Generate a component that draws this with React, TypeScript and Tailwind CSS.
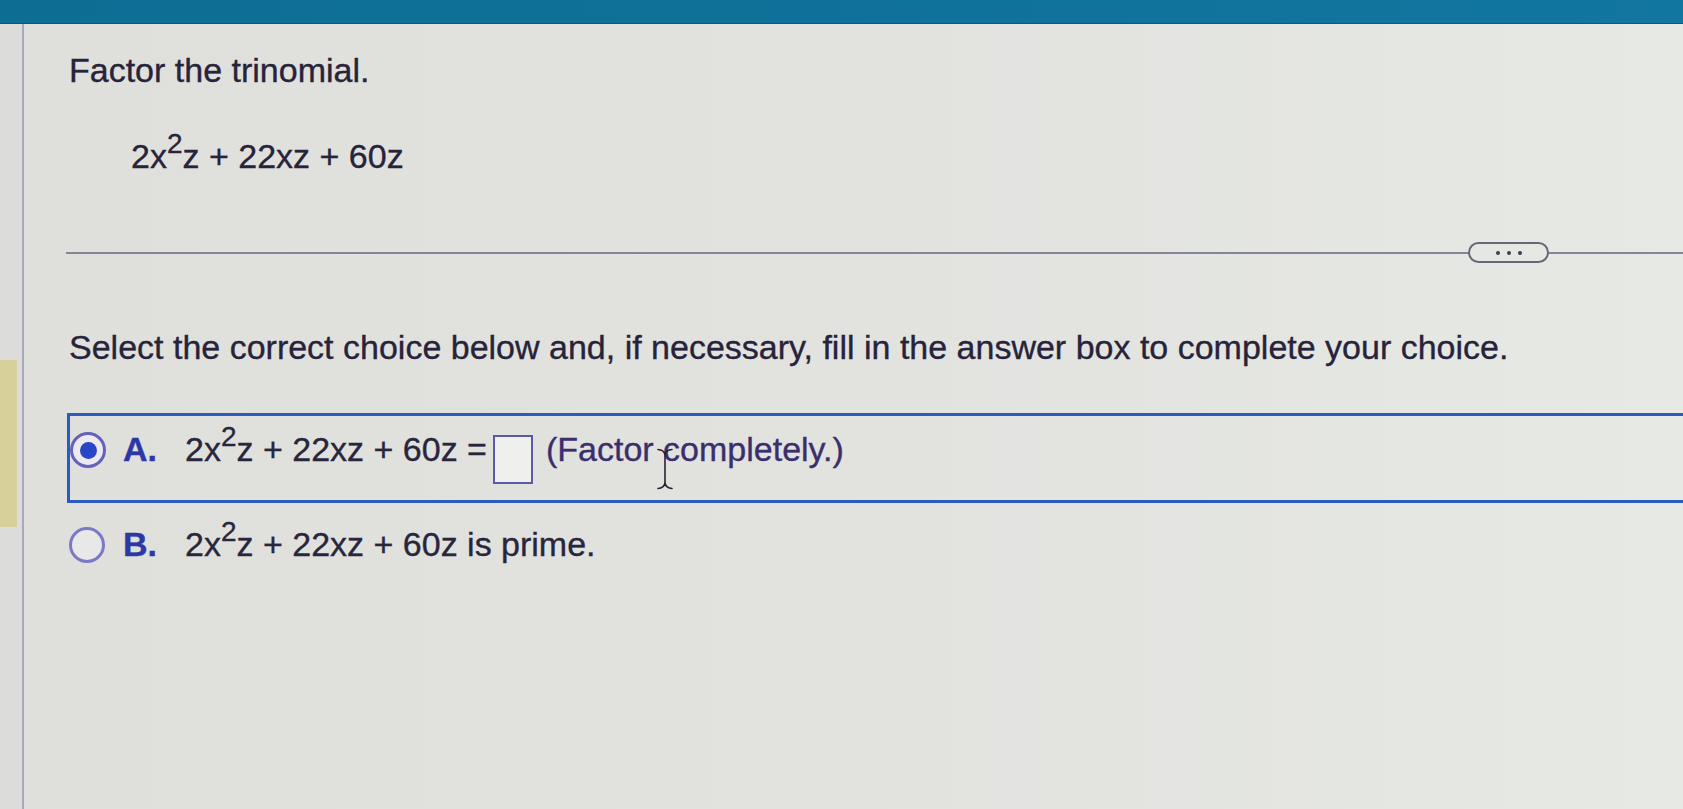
import React from "react";

function Formula({ tail }: { tail?: string }) {
  return (
    <span className="whitespace-nowrap">
      2x<sup className="text-[28px] -top-[15px]">2</sup>z + 22xz + 60z{tail}
    </span>
  );
}

function Radio({ checked }: { checked?: boolean }) {
  return (
    <div
      className={
        "mt-[3px] flex h-[36px] w-[36px] shrink-0 items-center justify-center rounded-full border-[3px] " +
        (checked ? "border-[#6462bc] bg-[#eceaf0]" : "border-[#7c7ac6] bg-[#e8e8e8]")
      }
    >
      {checked && <div className="h-[17px] w-[17px] rounded-full bg-[#2a45c6]" />}
    </div>
  );
}

function TextCursor() {
  return (
    <svg
      className="absolute left-[586px] top-[32px]"
      width="18"
      height="42"
      viewBox="0 0 18 42"
      fill="none"
      stroke="#2a2132"
      strokeWidth="1.6"
      strokeLinecap="round"
    >
      <path d="M2 1.5 Q8 2 9 6.5 Q10 2 16 1.5" />
      <path d="M9 6.5 V35" />
      <path d="M2 40.5 Q8 40 9 35 Q10 40 16 40.5" />
    </svg>
  );
}

export default function App() {
  return (
    <div className="flex h-[809px] w-full flex-col overflow-hidden bg-gradient-to-r from-[#dfdfdc] via-[#e2e2df] to-[#e6e9e4] font-['Liberation_Sans',Arial,sans-serif] text-[34px] leading-[40px] text-[#27233a] [-webkit-text-stroke:0.35px_currentColor]">
      {/* top bar */}
      <div className="h-[24px] shrink-0 border-b border-[#0b5a7a] bg-gradient-to-r from-[#0e6d93] to-[#1176a0]" />

      <div className="flex flex-1">
        {/* left rail */}
        <div className="flex w-[24px] shrink-0 border-r-2 border-[#a9a9bd] bg-[#dcdcda]">
          <div className="mt-[336px] h-[167px] w-[17px] bg-[#d7d09a]" />
        </div>

        {/* question */}
        <div className="flex flex-1 flex-col pl-[45px] pt-[26px]">
          <p>Factor the trinomial.</p>
          <p className="ml-[62px] mt-[46px]">
            <Formula />
          </p>

          <div className="-ml-[3px] mt-[66px] flex items-center">
            <div className="h-[2px] flex-1 bg-[#85859a]" />
            <div className="flex h-[21px] w-[81px] items-center justify-center gap-[7px] rounded-full border-2 border-[#66667a]">
              <span className="h-[4px] w-[4px] rounded-full bg-[#3d3d56]" />
              <span className="h-[4px] w-[4px] rounded-full bg-[#3d3d56]" />
              <span className="h-[4px] w-[4px] rounded-full bg-[#3d3d56]" />
            </div>
            <div className="h-[2px] w-[134px] bg-[#85859a]" />
          </div>

          <p className="mt-[64px] whitespace-nowrap">
            Select the correct choice below and, if necessary, fill in the answer box to complete your choice.
          </p>

          {/* choice A */}
          <div className="relative -ml-[2px] mt-[46px] h-[90px] border-[3px] border-r-0 border-[#2b5bbf] pt-[13px]">
            <div className="flex items-start">
              <Radio checked />
              <span className="ml-[17px] w-[62px] font-bold text-[#2c39a4]">A.</span>
              <span className="text-[#28263c]">
                <Formula tail=" =" />
              </span>
              <div className="ml-[6px] mt-[6px] h-[49px] w-[40px] border-2 border-[#5b59a8] bg-[#efefed] [-webkit-text-stroke:0]" />
              <span className="ml-[13px] whitespace-nowrap text-[#3a2e6c]">(Factor completely.)</span>
            </div>
            <TextCursor />
          </div>

          {/* choice B */}
          <div className="-ml-[2px] mt-[21px] flex items-start pl-[2px]">
            <Radio />
            <span className="ml-[18px] w-[62px] font-bold text-[#2c39a4]">B.</span>
            <span className="text-[#28263c]">
              <Formula tail=" is prime." />
            </span>
          </div>
        </div>
      </div>
    </div>
  );
}
